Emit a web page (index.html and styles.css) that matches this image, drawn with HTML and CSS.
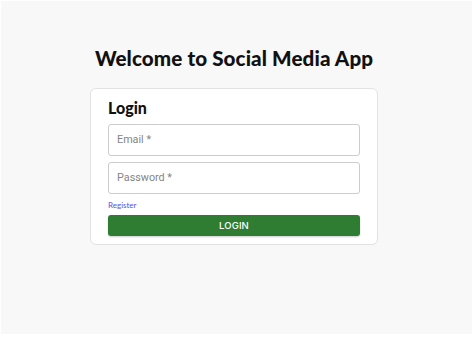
FILE: index.html
```html
<!DOCTYPE html>
<html>
<head>
<meta charset="utf-8">
<link rel="stylesheet" href="styles.css">
</head>
<body>
<div class="page">
  <h1 class="title">Welcome to Social Media App</h1>
  <div class="card">
    <h2 class="card-title">Login</h2>
    <div class="field"><span class="placeholder">Email *</span></div>
    <div class="field"><span class="placeholder">Password *</span></div>
    <a class="link" href="#">Register</a>
    <button class="btn">LOGIN</button>
  </div>
</div>
</body>
</html>
```
FILE: styles.css
```css
html, body {
  margin: 0;
  padding: 0;
  background: #ffffff;
}
.page {
  margin: 1px 2px 3px 1px;
  height: 333px;
  background: #f8f8f8;
  display: flex;
  flex-direction: column;
  align-items: center;
  box-sizing: border-box;
  padding-top: 43px;
  padding-right: 5px;
}
.title {
  margin: 0;
  font-family: "Lato", "Noto Sans", sans-serif;
  font-weight: 900;
  font-size: 20.6px;
  line-height: 28px;
  color: #111;
  letter-spacing: 0.1px;
}
.card {
  margin-top: 16px;
  width: 288px;
  box-sizing: border-box;
  background: #fff;
  border: 1px solid #e2e2e2;
  border-radius: 6px;
  padding: 9px 17px 8px;
  display: flex;
  flex-direction: column;
}
.card-title {
  margin: 0 0 6px;
  font-family: "Lato", "Noto Sans", sans-serif;
  font-weight: 900;
  font-size: 16px;
  line-height: 20px;
  color: #111;
}
.field {
  height: 32px;
  box-sizing: border-box;
  border: 1px solid #cccccc;
  border-radius: 3px;
  display: flex;
  align-items: center;
  padding-left: 8px;
  margin-bottom: 6px;
}
.placeholder {
  font-family: "Roboto", "Liberation Sans", sans-serif;
  font-size: 10.8px;
  color: #858585;
  margin-top: -2px;
}
.link {
  font-family: "Lato", "Noto Sans", sans-serif;
  font-size: 8px;
  line-height: 10px;
  color: #5a4ff0;
  text-decoration: none;
  margin-bottom: 5px;
  align-self: flex-start;
}
.btn {
  height: 21px;
  border: none;
  border-radius: 3px;
  background: #2e7d32;
  color: #fff;
  font-family: "Inter", "Roboto", sans-serif;
  font-weight: 500;
  font-size: 9.5px;
  letter-spacing: 0.1px;
  padding: 0;
  box-shadow: 0 1px 2px rgba(0,0,0,0.2);
}
```
